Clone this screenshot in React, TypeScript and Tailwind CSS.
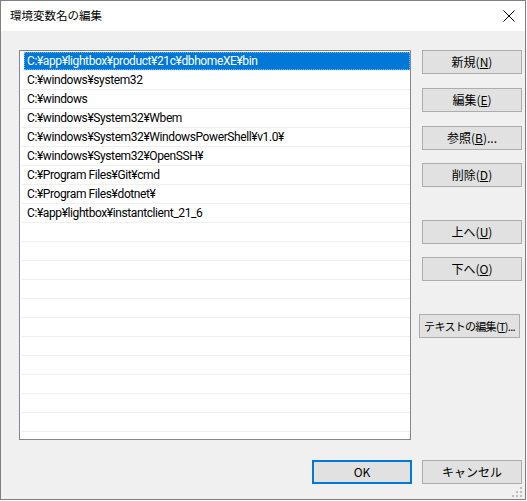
import { ReactNode } from "react";

const paths = [
  "C:¥app¥lightbox¥product¥21c¥dbhomeXE¥bin",
  "C:¥windows¥system32",
  "C:¥windows",
  "C:¥windows¥System32¥Wbem",
  "C:¥windows¥System32¥WindowsPowerShell¥v1.0¥",
  "C:¥windows¥System32¥OpenSSH¥",
  "C:¥Program Files¥Git¥cmd",
  "C:¥Program Files¥dotnet¥",
  "C:¥app¥lightbox¥instantclient_21_6",
];

function Btn({ children, className = "", focus = false, small = false }: { children: ReactNode; className?: string; focus?: boolean; small?: boolean }) {
  const border = focus ? "border-2 border-[#0078d7]" : "border border-[#adadad]";
  const size = small ? "w-[101px] text-[11px] tracking-[-0.7px]" : "w-[100px] text-[12px]";
  return (
    <button className={`h-[24px] bg-[#e1e1e1] leading-none text-black whitespace-nowrap flex items-center justify-center ${border} ${size} ${className}`}>
      {children}
    </button>
  );
}

export default function App() {
  const rows = [...Array(21).keys()];

  return (
    <div className="w-[527px] h-[501px] bg-white font-['Noto_Sans_CJK_JP',sans-serif]">
      <div className="relative w-[526px] h-[500px] border border-[#7f7f7f] bg-[#f0f0f0] flex flex-col">
        {/* title bar */}
        <div className="h-[30px] bg-white flex items-center justify-between pl-[9px] pr-[9px]">
          <span className="text-[11.5px] text-black">環境変数名の編集</span>
          <svg width="12" height="12" viewBox="0 0 12 12" className="mr-[1px]">
            <path d="M0.5 0.5 L11.5 11.5 M11.5 0.5 L0.5 11.5" stroke="#000" strokeWidth="1" />
          </svg>
        </div>

        <div className="flex pt-[19px] pl-[18px]">
          {/* list */}
          <div className="w-[392px] h-[390px] bg-white border border-[#828790] pt-px pl-px overflow-hidden font-['Roboto','Noto_Sans_CJK_JP',sans-serif] tracking-[-0.4px]">
            {rows.map((i) => (
              <div key={i} className="h-[19px] border-b border-[#f0f0f0]">
                {i === 0 ? (
                  <div className="ml-[3px] h-[18px] bg-[#0078d7] text-white text-[12px] leading-[16px] pl-[2px] border border-dotted border-[#7fb8ea]">
                    {paths[i]}
                  </div>
                ) : (
                  <div className="h-[18px] text-black text-[12px] leading-[18px] pl-[6px]">
                    {paths[i] ?? ""}
                  </div>
                )}
              </div>
            ))}
          </div>

          {/* side buttons */}
          <div className="flex flex-col ml-[11px]">
            <Btn>新規(<u>N</u>)</Btn>
            <Btn className="mt-[14px]">編集(<u>E</u>)</Btn>
            <Btn className="mt-[14px]">参照(<u>B</u>)...</Btn>
            <Btn className="mt-[13px]">削除(<u>D</u>)</Btn>
            <Btn className="mt-[33px]">上へ(<u>U</u>)</Btn>
            <Btn className="mt-[13px]">下へ(<u>O</u>)</Btn>
            <Btn small className="mt-[33px] -ml-[3px]">テキストの編集(<u>T</u>)...</Btn>
          </div>
        </div>

        {/* footer */}
        <div className="flex justify-end gap-[10px] mt-[20px] pr-[3px]">
          <Btn focus>OK</Btn>
          <Btn>キャンセル</Btn>
        </div>

        {/* resize grip */}
        <svg width="10" height="10" viewBox="0 0 10 10" className="absolute right-[3px] bottom-[2px]">
          <rect x="8" y="0" width="2" height="2" fill="#bdbdbd" />
          <rect x="4" y="4" width="2" height="2" fill="#bdbdbd" />
          <rect x="8" y="4" width="2" height="2" fill="#bdbdbd" />
          <rect x="0" y="8" width="2" height="2" fill="#bdbdbd" />
          <rect x="4" y="8" width="2" height="2" fill="#bdbdbd" />
          <rect x="8" y="8" width="2" height="2" fill="#bdbdbd" />
        </svg>
      </div>
    </div>
  );
}
